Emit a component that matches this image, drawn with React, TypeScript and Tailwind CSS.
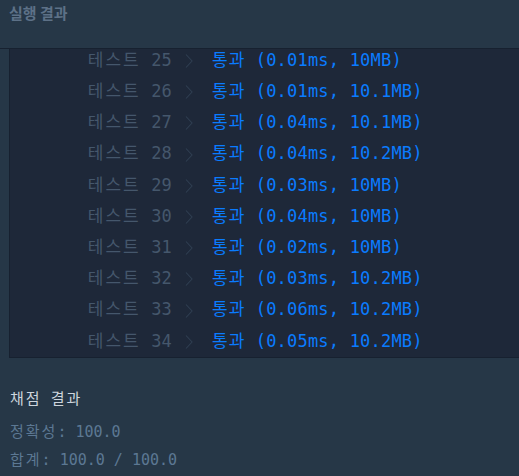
const rows = [
  { n: 25, time: "0.01ms", mem: "10MB" },
  { n: 26, time: "0.01ms", mem: "10.1MB" },
  { n: 27, time: "0.04ms", mem: "10.1MB" },
  { n: 28, time: "0.04ms", mem: "10.2MB" },
  { n: 29, time: "0.03ms", mem: "10MB" },
  { n: 30, time: "0.04ms", mem: "10MB" },
  { n: 31, time: "0.02ms", mem: "10MB" },
  { n: 32, time: "0.03ms", mem: "10.2MB" },
  { n: 33, time: "0.06ms", mem: "10.2MB" },
  { n: 34, time: "0.05ms", mem: "10.2MB" },
];

const mono = "font-['DejaVu_Sans_Mono','Noto_Sans_CJK_KR',monospace]";

function Chevron() {
  return (
    <svg width="8" height="14" viewBox="0 0 8 14" className="inline-block align-middle">
      <polyline points="1,0.5 7,7 1,13.5" fill="none" stroke="#2f3e51" strokeWidth="1.1" />
    </svg>
  );
}

export default function App() {
  return (
    <div className="w-[519px] h-[476px] overflow-hidden bg-[#263747] font-['Noto_Sans_CJK_KR',sans-serif]">
      {/* header */}
      <div className="h-[49px] border-b border-[#172130] px-[9px] pt-[1px]">
        <h2 className="text-[15px] font-bold leading-[24px] text-[#5d7187]">실행 결과</h2>
      </div>

      {/* result console */}
      <div className="ml-[9px] h-[309px] overflow-hidden border-l border-b border-[#172130] bg-[#1e2839]">
        <table className={`-mt-[4px] text-[17px] tracking-[0.2px] ${mono}`}>
          <tbody>
            {rows.map((r) => (
              <tr key={r.n} className="h-[31.2px]">
                <td className="w-[162px] text-right text-[#45576c] whitespace-nowrap">
                  <span className="tracking-[2px]">테스트</span> {r.n}
                </td>
                <td className="w-[40px] pr-[6px] text-center leading-none">
                  <Chevron />
                </td>
                <td className="text-[#0a7cff] whitespace-nowrap">
                  <span className="tracking-[1px]">통과</span> ({r.time}, {r.mem})
                </td>
              </tr>
            ))}
          </tbody>
        </table>
      </div>

      {/* grading */}
      <div className={`px-[10px] pt-[31px] text-[15px] ${mono}`}>
        <div className="leading-[20px] text-[#cdd5dd]">
          <span className="tracking-[2px]">채점</span> <span className="tracking-[2px]">결과</span>
        </div>
        <div className="mt-[13px] leading-[20px] text-[#5c7893]">
          <span className="tracking-[2px]">정확성</span>: 100.0
        </div>
        <div className="mt-[8px] leading-[20px] text-[#5c7893]">
          <span className="tracking-[2px]">합계</span>: 100.0 / 100.0
        </div>
      </div>
    </div>
  );
}
